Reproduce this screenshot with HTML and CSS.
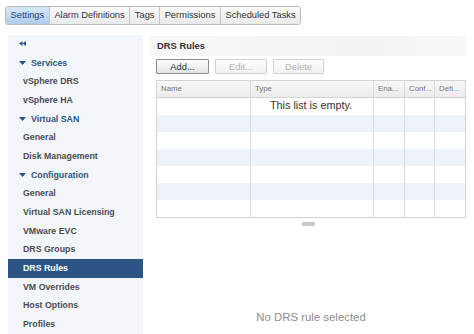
FILE: index.html
```html
<!DOCTYPE html>
<html>
<head>
<meta charset="utf-8">
<link rel="stylesheet" href="styles.css">
</head>
<body>
<div class="tabs">
  <div class="tab active">Settings</div>
  <div class="tab">Alarm Definitions</div>
  <div class="tab">Tags</div>
  <div class="tab">Permissions</div>
  <div class="tab">Scheduled Tasks</div>
</div>
<div class="main">
  <nav class="sidebar">
    <div class="collapse"><svg width="7" height="5" viewBox="0 0 7 5"><path d="M0 2.5L3.5 0V5Z M3.5 2.5L7 0V5Z" fill="#2c5585"/></svg></div>
    <div class="group"><svg class="tri" width="7" height="4" viewBox="0 0 7 4"><path d="M0 0H7L3.5 4Z" fill="#2c5585"/></svg>Services</div>
    <div class="item">vSphere DRS</div>
    <div class="item">vSphere HA</div>
    <div class="group"><svg class="tri" width="7" height="4" viewBox="0 0 7 4"><path d="M0 0H7L3.5 4Z" fill="#2c5585"/></svg>Virtual SAN</div>
    <div class="item">General</div>
    <div class="item">Disk Management</div>
    <div class="group"><svg class="tri" width="7" height="4" viewBox="0 0 7 4"><path d="M0 0H7L3.5 4Z" fill="#2c5585"/></svg>Configuration</div>
    <div class="item">General</div>
    <div class="item">Virtual SAN Licensing</div>
    <div class="item">VMware EVC</div>
    <div class="item">DRS Groups</div>
    <div class="item selected">DRS Rules</div>
    <div class="item">VM Overrides</div>
    <div class="item">Host Options</div>
    <div class="item">Profiles</div>
  </nav>
  <section class="content">
    <div class="title">DRS Rules</div>
    <div class="buttons">
      <button class="btn add">Add...</button>
      <button class="btn edit disabled">Edit...</button>
      <button class="btn del disabled">Delete</button>
    </div>
    <div class="table">
      <div class="row head">
        <div class="cell">Name</div>
        <div class="cell">Type</div>
        <div class="cell">Ena...</div>
        <div class="cell">Conf...</div>
        <div class="cell">Defi...</div>
      </div>
      <div class="row"><div class="cell"></div><div class="cell"></div><div class="cell"></div><div class="cell"></div><div class="cell"></div></div>
      <div class="row alt"><div class="cell"></div><div class="cell"></div><div class="cell"></div><div class="cell"></div><div class="cell"></div></div>
      <div class="row"><div class="cell"></div><div class="cell"></div><div class="cell"></div><div class="cell"></div><div class="cell"></div></div>
      <div class="row alt"><div class="cell"></div><div class="cell"></div><div class="cell"></div><div class="cell"></div><div class="cell"></div></div>
      <div class="row"><div class="cell"></div><div class="cell"></div><div class="cell"></div><div class="cell"></div><div class="cell"></div></div>
      <div class="row alt"><div class="cell"></div><div class="cell"></div><div class="cell"></div><div class="cell"></div><div class="cell"></div></div>
      <div class="row"><div class="cell"></div><div class="cell"></div><div class="cell"></div><div class="cell"></div><div class="cell"></div></div>
      <div class="empty">This list is empty.</div>
    </div>
    <div class="splitter"><span class="handle"></span></div>
    <div class="details">No DRS rule selected</div>
  </section>
</div>
</body>
</html>
```

FILE: styles.css
```css
* { box-sizing: border-box; }
html, body { margin: 0; padding: 0; background: #fff; }
body {
  width: 474px;
  height: 334px;
  overflow: hidden;
  font-family: "Liberation Sans", Arial, sans-serif;
  color: #333;
}

.tabs {
  display: inline-flex;
  margin: 6px 0 0 5px;
  height: 19px;
  border: 1px solid #b9b9b9;
  border-radius: 3px;
  overflow: hidden;
}
.tab {
  font-size: 9.3px;
  line-height: 17px;
  padding: 0 4.6px;
  color: #333;
  background: linear-gradient(#fbfbfb, #e9e9e9);
  border-left: 1px solid #c4c4c4;
}
.tab:first-child { border-left: none; }
.tab.active {
  background: linear-gradient(#d9e8f9, #aecbee);
  color: #23456e;
}

.main {
  display: flex;
  margin-top: 10px;
  height: 299px;
}

.sidebar {
  width: 135px;
  margin-left: 8px;
  background: #f2f5f9;
  font-size: 8.8px;
  font-weight: bold;
}
.collapse {
  height: 18.5px;
  display: flex;
  align-items: center;
  padding-left: 11px;
  padding-bottom: 1px;
}
.group, .item {
  height: 18.7px;
  line-height: 18.7px;
  white-space: nowrap;
}
.group {
  color: #2c5585;
  display: flex;
  align-items: center;
  padding-left: 11px;
}
.group .tri { margin-right: 5px; }
.item {
  color: #4d4d4d;
  padding-left: 15px;
}
.item.selected {
  background: #2c5585;
  color: #fff;
}

.content {
  flex: 1;
  margin-left: 7px;
  margin-right: 8px;
  display: flex;
  flex-direction: column;
}
.title {
  margin-top: 1px;
  height: 20px;
  line-height: 20px;
  padding-left: 7px;
  font-size: 9.4px;
  font-weight: bold;
  color: #333;
  background: linear-gradient(90deg, #f6f6f6, #f3f3f3 70%, #f7f7f7);
}
.buttons {
  display: flex;
  gap: 6px;
  margin-top: 3px;
  padding-left: 6px;
}
.btn {
  width: 53px;
  height: 15px;
  padding: 0;
  font-family: "Liberation Sans", Arial, sans-serif;
  font-size: 9.3px;
  color: #333;
  border: 1px solid #8c8c8c;
  border-radius: 1px;
  background: linear-gradient(#fdfdfd, #e4e4e4);
}
.btn.edit { width: 52px; }
.btn.del { width: 51px; }
.btn.disabled {
  color: #b3b3b3;
  border-color: #d0d0d0;
  background: linear-gradient(#fefefe, #f1f1f1);
}
.table {
  position: relative;
  margin: 6px 0 0 6px;
  border: 1px solid #d3d3d3;
}
.row {
  display: grid;
  grid-template-columns: 93px 123px 31px 30px 1fr;
  height: 17px;
}
.row.alt { background: #eef3fa; }
.row .cell { border-left: 1px solid #dadada; }
.row .cell:first-child { border-left: none; }
.row.head {
  height: 17px;
  background: linear-gradient(#f7f7f7, #ececec);
  border-bottom: 1px solid #d3d3d3;
}
.row.head .cell {
  font-size: 7.8px;
  color: #777;
  line-height: 16px;
  padding-left: 4px;
  white-space: nowrap;
  overflow: hidden;
}
.empty {
  position: absolute;
  left: 0;
  right: 0;
  top: 18px;
  text-align: center;
  font-size: 10.8px;
  line-height: 12px;
  color: #333;
}
.splitter {
  display: flex;
  justify-content: center;
  padding-top: 4px;
}
.handle {
  width: 13px;
  height: 4px;
  background: #c9c9c9;
}
.details {
  margin-top: 85px;
  text-align: center;
  font-size: 11.4px;
  color: #8c8c8c;
  padding-left: 6px;
}
```
